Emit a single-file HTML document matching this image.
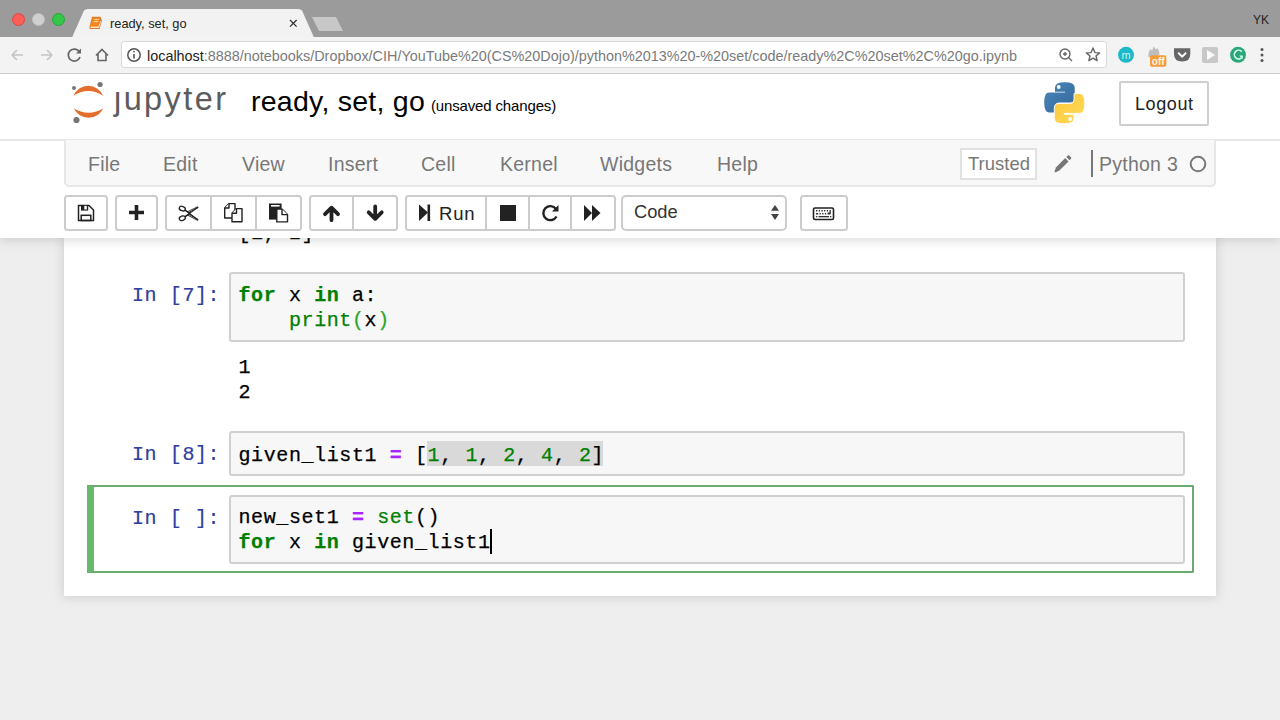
<!DOCTYPE html>
<html><head><meta charset="utf-8">
<style>
*{box-sizing:border-box;margin:0;padding:0}
html,body{width:1280px;height:720px;overflow:hidden;background:#eeeeee;font-family:"Liberation Sans",sans-serif;position:relative}
.a{position:absolute}
.mono{font-family:"Liberation Mono",monospace}
/* chrome */
#tabstrip{left:0;top:0;width:1280px;height:37px;background:#9b9b9b}
#toolbar{left:0;top:37px;width:1280px;height:37px;background:#f3f3f3;border-bottom:1px solid #cdcdcd}
.dot{width:13px;height:13px;border-radius:50%;top:12.5px}
#addr{left:121px;top:41px;width:986px;height:27px;background:#fff;border:1px solid #d9d9d9;border-radius:3px}
.url{left:147px;top:48px;font-size:14.4px;color:#7a7a7a;white-space:nowrap;letter-spacing:0}
/* jupyter */
#header{left:0;top:74px;width:1280px;height:164px;background:#fff;box-shadow:0 1px 10px 1px rgba(87,87,87,0.22);clip-path:inset(0 0 -30px 0)}
#hline{left:0;top:139px;width:1280px;height:2px;background:#e9e9e9}
#menubar{left:64px;top:140px;width:1152px;height:46.5px;background:#f8f8f8;border:2px solid #e7e7e7;border-top:none;border-radius:0 0 5px 5px}
.menu{top:153px;font-size:19.5px;color:#777;letter-spacing:0.25px;white-space:nowrap}
.btn{top:195px;height:36px;border:2px solid #cccccc;border-radius:3.5px;background:#fff}
.bsep{top:196px;width:2px;height:34px;background:#cccccc}
#nb{left:64px;top:238px;width:1152px;height:358px;background:#fff;box-shadow:0 0 10px 1px rgba(87,87,87,0.2)}
.inp{left:228.5px;width:956px;background:#f7f7f7;border:2px solid #d0d0d0;border-radius:3px}
.prompt{left:132px;font-size:20px;color:#303F9F;white-space:pre;font-family:"Liberation Mono",monospace;letter-spacing:0.6px;-webkit-text-stroke:0.2px currentColor}
.code{left:238.5px;font-size:20px;color:#000;white-space:pre;font-family:"Liberation Mono",monospace;letter-spacing:0.6px;line-height:25.2px;-webkit-text-stroke:0.25px currentColor}
.kw{color:#008000;font-weight:bold}
.bi{color:#008000}
.op{color:#AA22FF;font-weight:bold}
.nm{color:#008000}
.br{color:#2aa72a}
</style></head><body>
<!-- Chrome tab strip -->
<div class="a" id="tabstrip"></div>
<div class="a dot" style="left:12px;background:#fc5f57;border:0.5px solid #e0443e"></div>
<div class="a dot" style="left:32px;background:#d0d0d0;border:0.5px solid #c0c0c0"></div>
<div class="a dot" style="left:52px;background:#35c649;border:0.5px solid #23a737"></div>
<svg class="a" style="left:0;top:0" width="360" height="40">
  <path d="M72,37.5 L84,10.5 Q85.5,9 88,9 L298,9 Q300.5,9 302,10.5 L314,37.5 Z" fill="#f2f2f2"/>
  <path d="M312,17 L336,17 L343,31 L319,31 Z" fill="#c8c8c8"/>
  <path d="M290,20 L296.6,26.6 M296.6,20 L290,26.6" stroke="#333" stroke-width="1.3"/>
  <path d="M92,16.8 L100.4,16.8 L102,20.3 L99.6,28.9 L90.2,28.9 Q88.8,28.2 89.6,26.4 Z" fill="#d9782a"/>
  <path d="M92.5,17.4 L100.2,17.4 L98,26.2 L90.2,26.2 Z" fill="#f7861c"/>
  <path d="M90.4,26.5 L98.2,26.5 L100.8,20.6 L101.3,21 L99.1,28.1 L90.6,28.1 Z" fill="#fde2b8"/>
  <path d="M94.3,19.6 L99.2,19.6 M93.6,21.6 L98.4,21.6" stroke="#fdd8a6" stroke-width="1"/>
</svg>
<div class="a" style="left:110px;top:16px;font-size:12.8px;color:#222">ready, set, go</div>
<div class="a" style="left:1253px;top:13px;font-size:12px;color:#222">YK</div>
<!-- toolbar -->
<div class="a" id="toolbar"></div>
<div class="a" id="addr"></div>
<svg class="a" style="left:0;top:37px" width="1280" height="37">
  <!-- back -->
  <path d="M12,18 L23,18 M12,18 L17,13 M12,18 L17,23" stroke="#c4c4c4" stroke-width="1.6" fill="none"/>
  <path d="M52,18 L41,18 M52,18 L47,13 M52,18 L47,23" stroke="#c4c4c4" stroke-width="1.6" fill="none"/>
  <!-- reload -->
  <path d="M79.5,15 A6,6 0 1 0 80,20" stroke="#666" stroke-width="1.7" fill="none"/>
  <path d="M81,11.5 L81,16.5 L76,16.5 Z" fill="#666"/>
  <!-- home -->
  <path d="M96,18.5 L102,12.5 L108,18.5 M98,17 L98,23.5 L106,23.5 L106,17" stroke="#666" stroke-width="1.6" fill="none"/>
  <!-- info -->
  <circle cx="134" cy="18" r="6.2" stroke="#555" stroke-width="1.5" fill="none"/>
  <path d="M134,17 L134,21.5" stroke="#555" stroke-width="1.6"/>
  <circle cx="134" cy="14.6" r="0.9" fill="#555"/>
  <!-- zoom -->
  <circle cx="1065" cy="17" r="5" stroke="#666" stroke-width="1.4" fill="none"/>
  <path d="M1068.5,20.5 L1072,24 M1063,17 L1067,17 M1065,15 L1065,19" stroke="#666" stroke-width="1.4"/>
  <!-- star -->
  <path d="M1093,11 L1094.9,15.6 L1099.6,15.9 L1096,19 L1097.1,23.6 L1093,21.1 L1088.9,23.6 L1090,19 L1086.4,15.9 L1091.1,15.6 Z" stroke="#666" stroke-width="1.4" fill="none" stroke-linejoin="round"/>
  <!-- m ext -->
  <circle cx="1126" cy="17.8" r="8" fill="#1db9c8"/>
  <text x="1126" y="21.5" font-size="11" fill="#c8f4f8" text-anchor="middle" font-family="Liberation Sans">m</text>
  <!-- off ext -->
  <path d="M1148.5,20 Q1148,14 1151,12 L1152,14 L1153.5,9.5 L1156,12.5 L1157.5,11 Q1159.5,14 1159.5,17 L1155,21 Z" fill="#bdbdbd"/>
  <rect x="1150" y="18.2" width="16.3" height="11.6" rx="2" fill="#f59c35"/>
  <text x="1158.2" y="27.8" font-size="10" fill="#fff6e8" text-anchor="middle" font-family="Liberation Sans" font-weight="bold">off</text>
  <!-- pocket -->
  <path d="M1174,11.2 L1190.3,11.2 L1190.3,17 Q1190.3,24.5 1182.15,24.6 Q1174,24.5 1174,17 Z" fill="#676767"/>
  <path d="M1178.2,15.8 L1182.15,19.6 L1186.1,15.8" stroke="#fff" stroke-width="1.9" fill="none"/>
  <!-- play -->
  <rect x="1202" y="10" width="16" height="16" rx="2" fill="#c8c8c8"/>
  <path d="M1207,13 L1215,18 L1207,23 Z" fill="#fafafa"/>
  <!-- grammarly -->
  <circle cx="1238" cy="17.8" r="8" fill="#2aa87b"/>
  <path d="M1241.8,14.6 A4.3,4.3 0 1 0 1241.5,20.8" stroke="#d9fff0" stroke-width="1.6" fill="none"/><path d="M1239.2,18.6 L1242.8,18.6 L1242.8,22 Z" fill="#d9fff0"/>
  <!-- menu -->
  <circle cx="1262" cy="12.5" r="1.5" fill="#555"/><circle cx="1262" cy="18" r="1.5" fill="#555"/><circle cx="1262" cy="23.5" r="1.5" fill="#555"/>
</svg>
<div class="a url"><span style="color:#222">localhost</span>:8888/notebooks/Dropbox/CIH/YouTube%20(CS%20Dojo)/python%2013%20-%20set/code/ready%2C%20set%2C%20go.ipynb</div>

<!-- notebook -->
<div class="a" id="nb"></div>

<!-- cells -->
<div class="a code" style="top:220.5px">[1, 2]</div>
<div class="a prompt" style="top:284px">In [7]:</div>
<div class="a inp" style="top:272px;height:70px"></div>
<div class="a code" style="top:283px"><span class="kw">for</span> x <span class="kw">in</span> a:
    <span class="bi">print</span><span class="br">(</span>x<span class="br">)</span></div>
<div class="a code" style="top:354.5px">1
2</div>
<div class="a prompt" style="top:443px">In [8]:</div>
<div class="a inp" style="top:431px;height:44.5px"></div>
<div class="a" style="left:427px;top:441px;width:176px;height:24.5px;background:#d9d9d9"></div>
<div class="a code" style="top:442.5px">given_list1 <span class="op">=</span> [<span class="nm">1</span>, <span class="nm">1</span>, <span class="nm">2</span>, <span class="nm">4</span>, <span class="nm">2</span>]</div>
<div class="a" style="left:87px;top:485px;width:1107px;height:87.5px;border:2px solid #6cab6f;border-left:7px solid #66b86a;border-radius:0 2px 2px 0"></div>
<div class="a prompt" style="top:506.5px">In [ ]:</div>
<div class="a inp" style="top:495px;height:68.5px"></div>
<div class="a code" style="top:505px">new_set1 <span class="op">=</span> <span class="bi">set</span>()
<span class="kw">for</span> x <span class="kw">in</span> given_list1</div>
<div class="a" style="left:490px;top:529px;width:2px;height:25px;background:#000"></div>

<!-- jupyter header -->
<div class="a" id="header"></div>
<div class="a" id="hline"></div>

<!-- jupyter logo -->
<svg class="a" style="left:60px;top:74px" width="180" height="64">
  <path d="M13.5,21.7 A15.9,15.9 0 0 1 43,21.7 A25.5,25.5 0 0 0 13.5,21.7 Z" fill="#e46e2e"/>
  <path d="M13.8,34.3 A16.3,16.3 0 0 0 43.3,34.3 A26.9,26.9 0 0 1 13.8,34.3 Z" fill="#e46e2e"/>
  <circle cx="40.1" cy="10.5" r="2.6" fill="#767677"/>
  <circle cx="14" cy="13.9" r="2" fill="#767677"/>
  <circle cx="16.5" cy="46" r="3.1" fill="#767677"/>
</svg>
<svg class="a" style="left:100px;top:74px" width="140" height="60"><text x="14" y="36.3" font-family="Liberation Sans" font-size="32.5" fill="#5c5c5c" textLength="112" lengthAdjust="spacing">&#x237;upyter</text></svg>
<div class="a" style="left:251px;top:84.5px;font-size:28.5px;letter-spacing:0.25px;color:#000;white-space:nowrap">ready, set, go</div><div class="a" style="left:431px;top:97px;font-size:15px;color:#000;white-space:nowrap;letter-spacing:-0.15px">(unsaved changes)</div>
<!-- python logo -->
<svg class="a" style="left:1044px;top:82px" width="42" height="42" viewBox="0 0 42 42">
  <defs>
    <linearGradient id="pb" x1="0" y1="0" x2="1" y2="1"><stop offset="0" stop-color="#4a85bb"/><stop offset="1" stop-color="#356a9a"/></linearGradient>
    <linearGradient id="py" x1="0" y1="0" x2="1" y2="1"><stop offset="0" stop-color="#ffdc58"/><stop offset="1" stop-color="#fcc73c"/></linearGradient>
  </defs>
  <path id="bl" d="M11,5.5 Q11,0.2 20.8,0.2 Q30.7,0.2 30.7,5.5 L30.7,16 Q30.7,20.5 26.2,20.5 L15.5,20.5 Q11,20.5 11,25 L11,30.4 L5,30.4 Q0.2,30.4 0.2,20.5 Q0.2,10.6 5,10.6 L21,10.6 L21,9.8 L11,9.8 Z" fill="url(#pb)"/>
  <circle cx="14.75" cy="5" r="1.9" fill="#fff"/>
  <path d="M11,5.5 Q11,0.2 20.8,0.2 Q30.7,0.2 30.7,5.5 L30.7,16 Q30.7,20.5 26.2,20.5 L15.5,20.5 Q11,20.5 11,25 L11,30.4 L5,30.4 Q0.2,30.4 0.2,20.5 Q0.2,10.6 5,10.6 L21,10.6 L21,9.8 L11,9.8 Z" fill="url(#py)" stroke="#fff" stroke-width="0.9" transform="rotate(180 20.5 21)"/>
  <circle cx="26.25" cy="37" r="1.9" fill="#fff"/>
</svg>
<div class="a" style="left:1119px;top:81px;width:89.5px;height:44.5px;border:2px solid #cfcfcf;border-radius:2px;background:#fff"></div>
<div class="a" style="left:1135px;top:93.5px;font-size:18px;color:#222;letter-spacing:0.6px">Logout</div>

<!-- menubar -->
<div class="a" id="menubar"></div>
<div class="a menu" style="left:88px">File</div>
<div class="a menu" style="left:163px">Edit</div>
<div class="a menu" style="left:242px">View</div>
<div class="a menu" style="left:328px">Insert</div>
<div class="a menu" style="left:421px">Cell</div>
<div class="a menu" style="left:500px">Kernel</div>
<div class="a menu" style="left:600px">Widgets</div>
<div class="a menu" style="left:717px">Help</div>
<div class="a" style="left:959.5px;top:147.5px;width:77px;height:32px;border:2px solid #e2e2e2;background:#fff"></div>
<div class="a menu" style="left:968px;top:153px;letter-spacing:0;font-size:18.5px;color:#777">Trusted</div>
<svg class="a" style="left:1050px;top:152px" width="30" height="28">
  <path d="M5,19.6 L5.9,15.4 L15.2,6.1 L18.5,9.4 L9.2,18.7 Z" fill="#777"/>
  <path d="M16.3,5 L17.8,3.5 Q18.6,2.8 19.3,3.5 L21,5.2 Q21.7,5.9 21,6.7 L19.5,8.3 Z" fill="#777"/>
  <path d="M4.4,20.4 L5.2,17 L7.8,19.6 Z" fill="#777"/>
</svg>
<div class="a" style="left:1091px;top:150px;width:2px;height:27px;background:#777"></div>
<div class="a menu" style="left:1099px;top:153px;color:#777">Python 3</div>
<svg class="a" style="left:1186px;top:152px" width="26" height="26"><circle cx="12" cy="12" r="7.3" stroke="#777" stroke-width="2" fill="none"/></svg>

<!-- toolbar buttons -->
<div class="a btn" style="left:64px;width:44px"></div>
<div class="a btn" style="left:115px;width:43px"></div>
<div class="a btn" style="left:165px;width:137px"></div>
<div class="a bsep" style="left:210px"></div>
<div class="a bsep" style="left:255px"></div>
<div class="a btn" style="left:309px;width:89px"></div>
<div class="a bsep" style="left:352px"></div>
<div class="a btn" style="left:405px;width:211px"></div>
<div class="a bsep" style="left:485px"></div>
<div class="a bsep" style="left:528px"></div>
<div class="a bsep" style="left:570px"></div>
<div class="a btn" style="left:621px;width:166px;border-radius:5px"></div>
<div class="a" style="left:634px;top:201px;font-size:18.3px;color:#333">Code</div>
<svg class="a" style="left:768px;top:202px" width="14" height="20">
  <path d="M3,8.7 L7,2.9 L11,8.7 Z M3,11.9 L11,11.9 L7,17.9 Z" fill="#444"/>
</svg>
<div class="a btn" style="left:800px;width:48px"></div>
<div class="a" style="left:439px;top:202.5px;font-size:18.5px;letter-spacing:0.8px;color:#222">Run</div>
<svg class="a" style="left:0;top:190px" width="860" height="40">
  <!-- save -->
  <g fill="none" stroke="#222" stroke-width="1.5">
    <path d="M78.5,15.5 L89,15.5 L93.5,20 L93.5,30.5 L78.5,30.5 Z"/>
    <rect x="81.2" y="25.3" width="9.6" height="5.2"/>
  </g>
  <rect x="81" y="15" width="7.2" height="5.6" fill="#222"/>
  <rect x="84.3" y="15.9" width="2.5" height="3.6" fill="#fff"/>
  <!-- plus -->
  <path d="M136.5,15 L136.5,30 M129,22.5 L144,22.5" stroke="#222" stroke-width="3.6"/>
  <!-- scissors -->
  <g stroke="#222" stroke-width="1.3" fill="none">
    <ellipse cx="182.3" cy="18.6" rx="3.1" ry="2.2" transform="rotate(18 182.3 18.6)"/>
    <ellipse cx="182.3" cy="28.2" rx="3.1" ry="2.2" transform="rotate(-18 182.3 28.2)"/>
    <path d="M185.2,20.2 L190,23.4 M185.2,26.6 L190,23.4" />
  </g>
  <g stroke="#222" stroke-width="0.9" fill="#fff" stroke-linejoin="round">
    <path d="M188.5,22.6 L198.2,17.6 L197.6,16.8 L187.8,21.6 Z"/>
    <path d="M188.5,24.2 L198.2,29.6 L197.6,30.4 L187.8,25.2 Z"/>
  </g>
  <path d="M185.2,20.2 L197.8,29.8 M185.2,26.6 L197.8,17.2" stroke="#222" stroke-width="1.1" fill="none"/>
  <!-- copy -->
  <g stroke="#222" stroke-width="1.4" fill="#fff" stroke-linejoin="round">
    <path d="M229,13.6 L235,13.6 L235,28 L224.7,28 L224.7,18 Z"/>
    <path d="M229,13.6 L229,18 L224.7,18"/>
    <path d="M236.5,18.6 L242,18.6 L242,31.7 L232,31.7 L232,23.2 Z"/>
    <path d="M236.5,18.6 L236.5,23.2 L232,23.2"/>
  </g>
  <!-- paste -->
  <rect x="269" y="13.5" width="12.6" height="16.1" fill="#222"/>
  <rect x="271" y="15" width="8.6" height="1.6" fill="#fff"/>
  <g stroke="#222" stroke-width="1.4" fill="#fff" stroke-linejoin="round">
    <path d="M276.8,19.1 L282,19.1 L287.5,24.6 L287.5,31.9 L276.8,31.9 Z"/>
    <path d="M282,19.1 L282,24.6 L287.5,24.6"/>
  </g>
  <!-- up arrow -->
  <path d="M331.5,30.2 L331.5,18.5 M325,24.2 L331.5,17.7 L338,24.2" stroke="#222" stroke-width="3.8" fill="none" stroke-linecap="round" stroke-linejoin="round"/>
  <!-- down arrow -->
  <path d="M375.2,16.4 L375.2,28 M368.7,22.3 L375.2,28.8 L381.7,22.3" stroke="#222" stroke-width="3.8" fill="none" stroke-linecap="round" stroke-linejoin="round"/>
  <!-- run -->
  <path d="M419,14.5 L428,22.5 L419,31 Z" fill="#222"/>
  <rect x="427.5" y="14.5" width="2.6" height="16.5" fill="#222"/>
  <!-- stop -->
  <rect x="500" y="15" width="16" height="16" fill="#222"/>
  <!-- restart -->
  <path d="M556,19 A7,7 0 1 0 556.5,26.5" stroke="#222" stroke-width="2.4" fill="none"/>
  <path d="M558.5,15 L558.5,21.5 L552,21.5 Z" fill="#222"/>
  <!-- ff -->
  <path d="M584,15 L592,23 L584,31 Z M592,15 L600.5,23 L592,31 Z" fill="#222"/>
  <!-- keyboard -->
  <rect x="813.5" y="18" width="20" height="11.5" rx="1.5" stroke="#222" stroke-width="1.6" fill="#fff"/>
  <g fill="#333">
    <rect x="816" y="20" width="1.3" height="1.5"/><rect x="818.7" y="20" width="1.3" height="1.5"/><rect x="821.4" y="20" width="1.3" height="1.5"/><rect x="824.1" y="20" width="1.3" height="1.5"/><rect x="826.8" y="20" width="1.3" height="1.5"/><rect x="829.5" y="20" width="1.3" height="3.5"/>
    <rect x="816" y="23" width="2.2" height="1.5"/><rect x="819.5" y="23" width="1.3" height="1.5"/><rect x="822.2" y="23" width="1.3" height="1.5"/><rect x="824.9" y="23" width="1.3" height="1.5"/><rect x="827.6" y="22.5" width="3" height="2"/>
    <rect x="816" y="26" width="1.3" height="1.3"/><rect x="818.5" y="26" width="10.5" height="1.3"/><rect x="830" y="26" width="1.3" height="1.3"/>
  </g>
</svg>

</body></html>
